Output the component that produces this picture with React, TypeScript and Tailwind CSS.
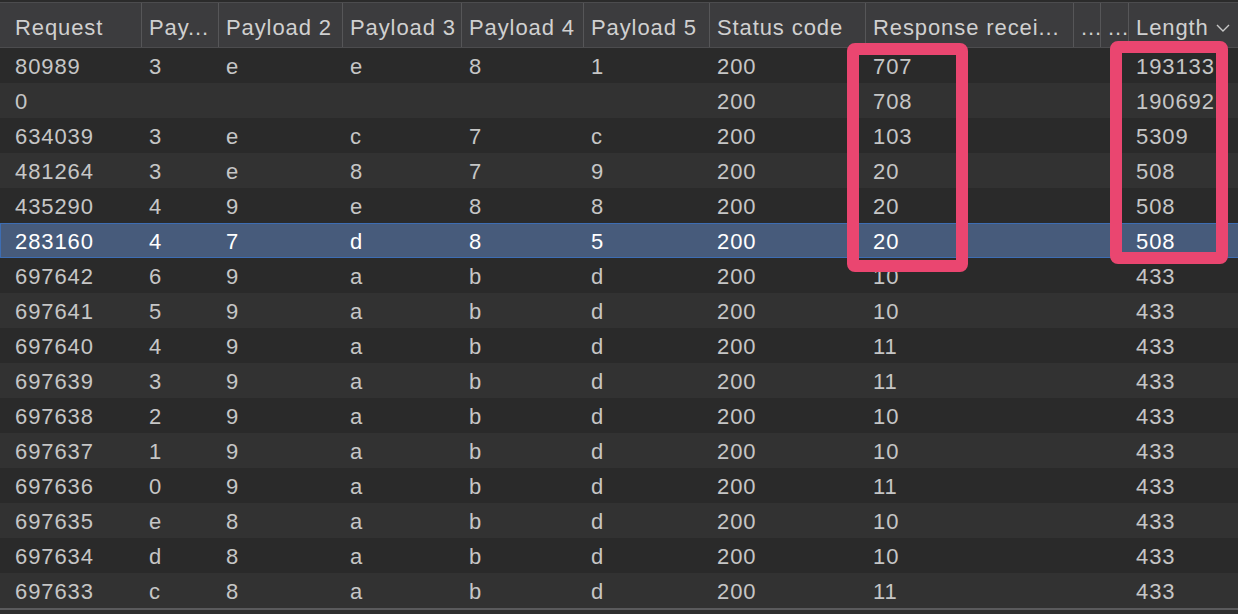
import React from "react";

const cols = [
  { label: "Request", w: 142, first: true },
  { label: "Pay...", w: 77 },
  { label: "Payload 2", w: 124 },
  { label: "Payload 3", w: 119 },
  { label: "Payload 4", w: 122 },
  { label: "Payload 5", w: 126 },
  { label: "Status code", w: 156 },
  { label: "Response recei...", w: 208 },
  { label: "...", w: 27 },
  { label: "...", w: 28 },
  { label: "Length", w: 109, sort: true },
];

const rows: string[][] = [
  ["80989", "3", "e", "e", "8", "1", "200", "707", "", "", "193133"],
  ["0", "", "", "", "", "", "200", "708", "", "", "190692"],
  ["634039", "3", "e", "c", "7", "c", "200", "103", "", "", "5309"],
  ["481264", "3", "e", "8", "7", "9", "200", "20", "", "", "508"],
  ["435290", "4", "9", "e", "8", "8", "200", "20", "", "", "508"],
  ["283160", "4", "7", "d", "8", "5", "200", "20", "", "", "508"],
  ["697642", "6", "9", "a", "b", "d", "200", "10", "", "", "433"],
  ["697641", "5", "9", "a", "b", "d", "200", "10", "", "", "433"],
  ["697640", "4", "9", "a", "b", "d", "200", "11", "", "", "433"],
  ["697639", "3", "9", "a", "b", "d", "200", "11", "", "", "433"],
  ["697638", "2", "9", "a", "b", "d", "200", "10", "", "", "433"],
  ["697637", "1", "9", "a", "b", "d", "200", "10", "", "", "433"],
  ["697636", "0", "9", "a", "b", "d", "200", "11", "", "", "433"],
  ["697635", "e", "8", "a", "b", "d", "200", "10", "", "", "433"],
  ["697634", "d", "8", "a", "b", "d", "200", "10", "", "", "433"],
  ["697633", "c", "8", "a", "b", "d", "200", "11", "", "", "433"],
];

export default function App() {
  return (
    <div
      className="relative w-[1238px] h-[614px] overflow-hidden bg-[#2b2b2b] pt-[2px] text-[22px] tracking-[0.9px]"
      style={{ fontFamily: '"Liberation Sans", Arial, sans-serif' }}
    >
      {/* header */}
      <div className="flex h-[46px] border-t border-b border-[#4c4c4e] bg-[#3c3c3e] text-[#d0d0d0]">
        {cols.map((c, i) => (
          <div
            key={i}
            style={{ width: c.w }}
            className={`flex shrink-0 items-center overflow-hidden whitespace-nowrap pt-[4px] ${
              c.first ? "pl-[15px]" : "pl-[7px]"
            } ${i < cols.length - 1 ? "border-r border-[#565658]" : ""}`}
          >
            <span>{c.label}</span>
            {c.sort && (
              <svg width="14" height="10" viewBox="0 0 14 10" className="ml-[7px] mt-[1px]">
                <path d="M1 2 L7 8 L13 2" stroke="#c8c8c8" strokeWidth="1.4" fill="none" />
              </svg>
            )}
          </div>
        ))}
      </div>

      {/* rows */}
      <div className="flex flex-col">
        {rows.map((r, ri) => {
          const sel = ri === 5;
          return (
            <div
              key={ri}
              className={`flex h-[35px] ${
                sel
                  ? "bg-[#475b7b] text-white border-y border-l border-[#3d6db3]"
                  : ri % 2 === 0
                  ? "bg-[#2a2a2a] text-[#c6c6c6]"
                  : "bg-[#323232] text-[#c6c6c6]"
              }`}
            >
              {cols.map((c, ci) => (
                <div
                  key={ci}
                  style={{ width: sel && ci === 0 ? c.w - 1 : c.w }}
                  className={`flex shrink-0 items-center whitespace-nowrap overflow-hidden pt-[2px] ${
                    c.first ? (sel ? "pl-[14px]" : "pl-[15px]") : "pl-[7px]"
                  }`}
                >
                  {r[ci]}
                </div>
              ))}
            </div>
          );
        })}
      </div>

      {/* bottom lines */}
      <div className="h-[2px] bg-[#5a5a5c]" />
      <div className="h-[4px] bg-[#2e2e2e]" />

      {/* highlight boxes */}
      <div className="absolute left-[847px] top-[43px] w-[121px] h-[229px] rounded-[8px] border-[12px] border-[#ea4670]" />
      <div className="absolute left-[1110px] top-[41px] w-[118px] h-[223px] rounded-[8px] border-[12px] border-[#ea4670]" />
    </div>
  );
}
